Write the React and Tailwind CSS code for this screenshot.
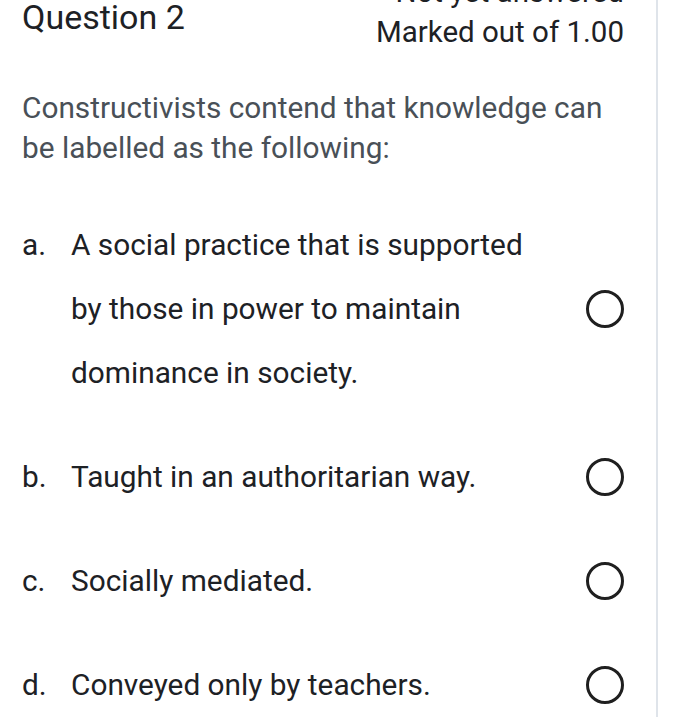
const options = [
  {
    label: "a.",
    lines: ["A social practice that is supported", "by those in power to maintain", "dominance in society."],
  },
  { label: "b.", lines: ["Taught in an authoritarian way."] },
  { label: "c.", lines: ["Socially mediated."] },
  { label: "d.", lines: ["Conveyed only by teachers."] },
];

function Radio() {
  return (
    <span className="block w-[38px] h-[38px] rounded-full border-[3.5px] border-[#1f1f1f] bg-white shrink-0" />
  );
}

export default function App() {
  return (
    <div
      className="w-[676px] h-[717px] overflow-hidden bg-white flex"
      style={{ fontFamily: "Roboto, 'Noto Sans', sans-serif" }}
    >
      <div className="w-[658px] border-r-2 border-[#dfe4ea] h-full pl-[22px] pr-[32px]">
        {/* header */}
        <div className="flex justify-between items-start">
          <h2 className="text-[34px] leading-[34px] text-[#1d2125]">Question 2</h2>
          <div className="text-right text-[29.5px] leading-[40px] text-[#1d2125] mt-[-28px]">
            <div>Not yet answered</div>
            <div>Marked out of 1.00</div>
          </div>
        </div>

        {/* question text */}
        <p className="mt-[36px] text-[29.8px] leading-[40px] text-[#495057]">
          Constructivists contend that knowledge can be labelled as the following:
        </p>

        {/* answers */}
        <div className="mt-[45px] flex flex-col gap-[40px]">
          {options.map((o) => (
            <div key={o.label} className="flex items-center text-[29.8px] leading-[64px] text-[#1d2125]">
              <div className="flex flex-1">
                <span className="w-[49px] shrink-0">{o.label}</span>
                <div>
                  {o.lines.map((l) => (
                    <div key={l}>{l}</div>
                  ))}
                </div>
              </div>
              <Radio />
            </div>
          ))}
        </div>
      </div>
    </div>
  );
}
